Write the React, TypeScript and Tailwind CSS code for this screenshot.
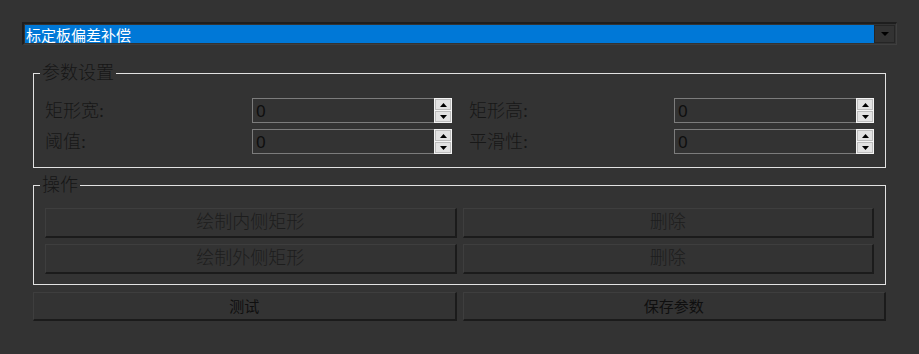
import React from "react";

const cjk = "font-['Noto_Sans_CJK_SC',sans-serif]";
const song = "font-['Liberation_Serif','Noto_Sans_CJK_SC',serif]";

function Arrow({ up }: { up?: boolean }) {
  return (
    <svg width="7" height="4" viewBox="0 0 7 4" className="block">
      {up ? <polygon points="0,4 7,4 3.5,0" fill="#000" /> : <polygon points="0,0 7,0 3.5,4" fill="#000" />}
    </svg>
  );
}

function SpinBox({ value }: { value: number }) {
  return (
    <div className="flex h-[25px] w-[200px]">
      <div className="flex flex-1 items-center border-y border-l border-[#7c7c7c] pl-[3px]">
        <span className="font-['Noto_Sans',sans-serif] text-[17px] leading-none text-[#0e0e0e]">{value}</span>
      </div>
      <div className="flex w-[18px] flex-col gap-[1px] bg-[#f4f4f4] p-[1px]">
        <div className="flex flex-1 items-center justify-center border border-[#bdbdbd] bg-[#e3e3e3]">
          <Arrow up />
        </div>
        <div className="flex flex-1 items-center justify-center border border-[#bdbdbd] bg-[#e3e3e3]">
          <Arrow />
        </div>
      </div>
    </div>
  );
}

function Field({ label, width }: { label: string; width: string }) {
  return (
    <div className={`${width} ${song} text-[18px] font-light leading-none text-[#171717]`}>{label}</div>
  );
}

function ActionButton({ children }: { children: React.ReactNode }) {
  return (
    <button className={`flex h-[30px] items-center justify-center border-t border-l border-[#3e3e3e] border-r-2 border-b-2 border-r-[#1b1b1b] border-b-[#1b1b1b] bg-[#333333] ${song} text-[18px] font-light text-[#1d1d1d]`}>
      {children}
    </button>
  );
}

function GroupBox({ title, children, className }: { title: string; children: React.ReactNode; className: string }) {
  return (
    <fieldset className={`ml-[33px] w-[853px] border border-[#e2e2e2] pl-[11px] pr-[11px] ${className}`}>
      <legend className={`-ml-[5px] px-[2px] ${song} text-[18px] font-light leading-[19px] text-[#161616]`}>{title}</legend>
      {children}
    </fieldset>
  );
}

export default function App() {
  return (
    <div className="h-[354px] w-[919px] bg-[#333333] pt-[22px]">
      {/* Combo box */}
      <div className="ml-[22px] h-[23px] w-[875px] border-t-2 border-l-2 border-[#1e1e1e] border-r border-b border-r-[#3f3f3f] border-b-[#3f3f3f] p-[1px]">
        <div className="flex h-full">
          <div className={`flex flex-1 items-center bg-[#0078d7] pl-[1px] ${cjk} text-[15px] leading-none text-white`}>
            标定板偏差补偿
          </div>
          <div className="flex w-[21px] items-center justify-center border border-[#252525] bg-[#333333]">
            <svg width="8" height="4" viewBox="0 0 8 4">
              <polygon points="0,0 8,0 4,4" fill="#000" />
            </svg>
          </div>
        </div>
      </div>

      {/* Parameters */}
      <GroupBox title="参数设置" className="mt-[19px] pt-[15px] pb-[13px]">
        <div className="flex flex-col gap-[6px]">
          <div className="flex items-center">
            <Field label="矩形宽:" width="w-[207px]" />
            <SpinBox value={0} />
            <div className="w-[17px]" />
            <Field label="矩形高:" width="w-[205px]" />
            <SpinBox value={0} />
          </div>
          <div className="flex items-center">
            <Field label="阈值:" width="w-[207px]" />
            <SpinBox value={0} />
            <div className="w-[17px]" />
            <Field label="平滑性:" width="w-[205px]" />
            <SpinBox value={0} />
          </div>
        </div>
      </GroupBox>

      {/* Operations */}
      <GroupBox title="操作" className="mt-[8px] pt-[13px] pb-[10px]">
        <div className="grid grid-cols-2 gap-x-[6px] gap-y-[6px]">
          <ActionButton>绘制内侧矩形</ActionButton>
          <ActionButton>删除</ActionButton>
          <ActionButton>绘制外侧矩形</ActionButton>
          <ActionButton>删除</ActionButton>
        </div>
      </GroupBox>

      {/* Bottom buttons */}
      <div className="ml-[33px] mt-[7px] grid w-[853px] grid-cols-2 gap-[6px]">
        <button className={`flex h-[29px] items-center justify-center border-t border-l border-[#3e3e3e] border-r-2 border-b-2 border-r-[#1b1b1b] border-b-[#1b1b1b] bg-[#333333] ${cjk} text-[15px] text-[#0f0f0f]`}>
          测试
        </button>
        <button className={`flex h-[29px] items-center justify-center border-t border-l border-[#3e3e3e] border-r-2 border-b-2 border-r-[#1b1b1b] border-b-[#1b1b1b] bg-[#333333] ${cjk} text-[15px] text-[#0f0f0f]`}>
          保存参数
        </button>
      </div>
    </div>
  );
}
